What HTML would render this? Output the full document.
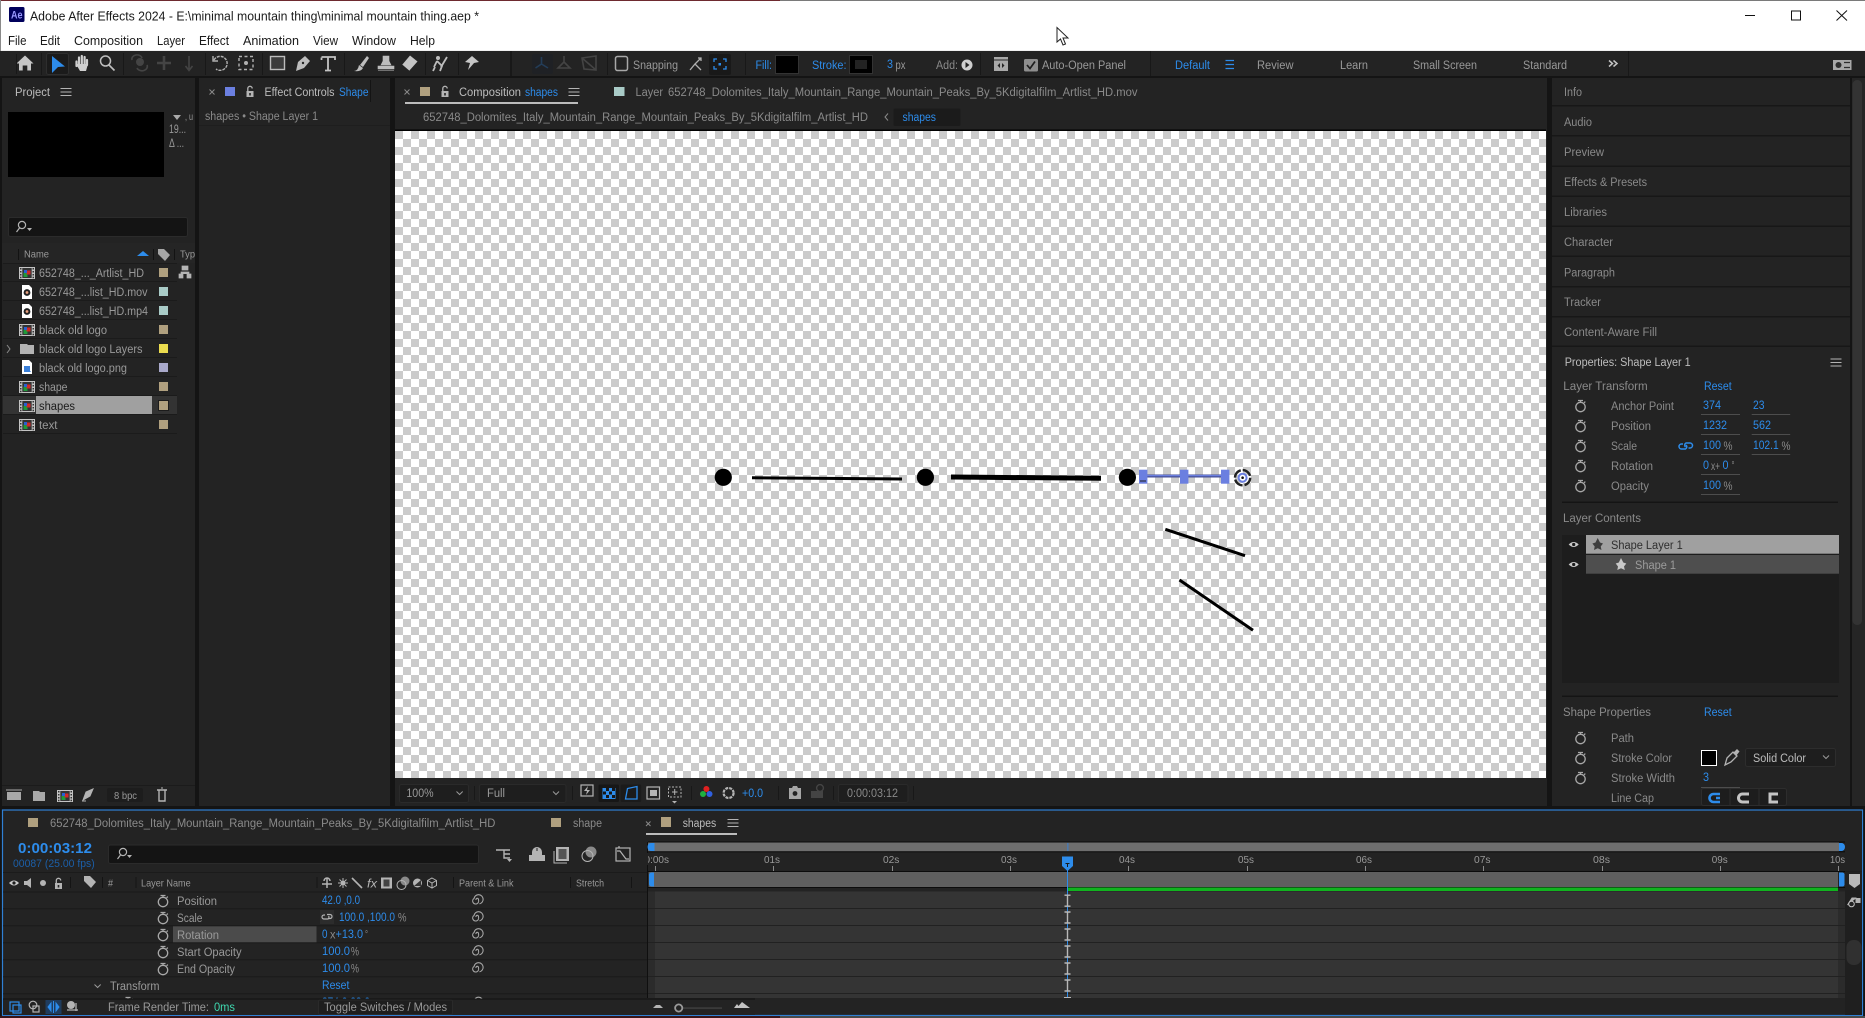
<!DOCTYPE html>
<html><head><meta charset="utf-8"><title>Adobe After Effects 2024</title>
<style>
html,body{margin:0;padding:0;background:#141414;width:1865px;height:1018px;overflow:hidden}
svg{display:block;position:absolute;left:0;top:0;filter:blur(.3px)}
text{font-family:"Liberation Sans",sans-serif;font-size:11.5px;fill:#999}
.m{fill:#1a1a1a;font-size:12.5px}
.b{fill:#2d8ceb}
.w{fill:#bdbdbd}
.d{fill:#8a8a8a}
.k{fill:#1c1c1c}
.s{font-size:10.5px}
.ic{fill:none;stroke:#b4b4b4;stroke-width:1.4}
.dim{fill:none;stroke:#444;stroke-width:1.6}
</style></head><body>
<svg width="1865" height="1018" viewBox="0 0 1865 1018" xmlns="http://www.w3.org/2000/svg">
<defs>
<pattern id="chk" width="16" height="16" patternUnits="userSpaceOnUse" x="395" y="131"><rect width="16" height="16" fill="#fff"/><rect width="8" height="8" fill="#cbcbcb"/><rect x="8" y="8" width="8" height="8" fill="#cbcbcb"/></pattern>
<symbol id="sw" overflow="visible"><circle cx="0" cy="1" r="4.7" fill="none" stroke="#a8a8a8" stroke-width="1.3"/><path d="M-2.5 -5.5H2.5M0 -5.5V-3.5M3.6 -3.2L4.8 -4.4" stroke="#a8a8a8" stroke-width="1.2" fill="none"/></symbol>
<symbol id="cmp" overflow="visible"><rect x="0" y="0" width="16" height="12" fill="#c4c4c4"/><rect x="1" y="1" width="1.5" height="1.5" fill="#333"/><rect x="1" y="4" width="1.5" height="1.5" fill="#333"/><rect x="1" y="7" width="1.5" height="1.5" fill="#333"/><rect x="1" y="9.7" width="1.5" height="1.5" fill="#333"/><rect x="13.5" y="1" width="1.5" height="1.5" fill="#333"/><rect x="13.5" y="4" width="1.5" height="1.5" fill="#333"/><rect x="13.5" y="7" width="1.5" height="1.5" fill="#333"/><rect x="13.5" y="9.7" width="1.5" height="1.5" fill="#333"/><rect x="3.3" y="1" width="9.4" height="10" fill="#333"/><rect x="4.5" y="5.5" width="4" height="4.5" fill="#1f9a3a"/><rect x="7.5" y="3.5" width="4" height="4" fill="#d02828"/><rect x="5" y="3" width="3" height="3" fill="#2a60d0"/></symbol>
<symbol id="mov" overflow="visible"><path d="M0 0H7L10 3V14H0Z" fill="#fff"/><circle cx="5" cy="7.5" r="3.4" fill="#222"/><circle cx="5" cy="7.5" r="1.4" fill="#e8a080"/></symbol>
<symbol id="spi" overflow="visible"><path d="M-1 0.5A1.3 1.3 0 1 1 1.5 0.5A3 3 0 1 1 -3 -1A4.6 4.6 0 1 1 2.5 4.3" fill="none" stroke="#a6a6a6" stroke-width="1.1"/></symbol>
<symbol id="eye" overflow="visible"><path d="M-5 0Q0 -5 5 0Q0 5 -5 0Z" fill="#c9c9c9"/><circle r="1.6" fill="#1c1c1c"/></symbol>
<symbol id="ibm" overflow="visible"><path d="M-3 -5.5H3M-3 5.5H3M0 -5.5V5.5" fill="none" stroke="#b8b8b8" stroke-width="1.4"/></symbol>
<symbol id="hm" overflow="visible"><path d="M-5.5 -3.5H5.5M-5.5 0H5.5M-5.5 3.5H5.5" stroke="#b4b4b4" stroke-width="1.1" fill="none"/></symbol>
<symbol id="lk" overflow="visible"><rect x="-3.5" y="-1" width="7" height="6" fill="#b4b4b4"/><path d="M-2.2 -1V-3.5A2.2 2.2 0 0 1 2.2 -3.5" fill="none" stroke="#b4b4b4" stroke-width="1.3"/><rect x="-0.8" y="1" width="1.6" height="2.5" fill="#232323"/></symbol>
</defs>

<!-- base -->
<rect width="1865" height="1018" fill="#141414"/>
<!-- title bar -->
<rect x="0" y="0" width="1865" height="51" fill="#fff"/>
<rect x="0" y="50" width="1865" height="1" fill="#efefef"/>
<rect x="0" y="0" width="780" height="1" fill="#6e2a2f"/><rect x="780" y="0" width="1085" height="1" fill="#7a7a7a"/>
<rect x="0" y="0" width="1" height="51" fill="#8a8a8a"/>
<rect x="9" y="7" width="15.5" height="15" rx="1.5" fill="#00005b"/>
<text x="11" y="18.5" textLength="11.5" lengthAdjust="spacingAndGlyphs" style="fill:#9999ff;font-size:11px;font-weight:bold">Ae</text>
<text class="m" x="30" y="20.5" textLength="449" lengthAdjust="spacingAndGlyphs">Adobe After Effects 2024 - E:\minimal mountain thing\minimal mountain thing.aep *</text>
<text class="m" x="8" y="45" textLength="18.5" lengthAdjust="spacingAndGlyphs">File</text>
<text class="m" x="40" y="45" textLength="20" lengthAdjust="spacingAndGlyphs">Edit</text>
<text class="m" x="74" y="45" textLength="69" lengthAdjust="spacingAndGlyphs">Composition</text>
<text class="m" x="157" y="45" textLength="28" lengthAdjust="spacingAndGlyphs">Layer</text>
<text class="m" x="199" y="45" textLength="30" lengthAdjust="spacingAndGlyphs">Effect</text>
<text class="m" x="243" y="45" textLength="56" lengthAdjust="spacingAndGlyphs">Animation</text>
<text class="m" x="313" y="45" textLength="25" lengthAdjust="spacingAndGlyphs">View</text>
<text class="m" x="352" y="45" textLength="44" lengthAdjust="spacingAndGlyphs">Window</text>
<text class="m" x="410" y="45" textLength="25" lengthAdjust="spacingAndGlyphs">Help</text>
<path d="M1745 15.5H1755" stroke="#111" stroke-width="1"/>
<rect x="1791.5" y="11" width="9" height="9" fill="none" stroke="#111" stroke-width="1"/>
<path d="M1836.5 10.5L1847 20.5M1847 10.5L1836.5 20.5" stroke="#111" stroke-width="1" fill="none"/>
<path d="M1057 27.5V42L1060.5 39L1063 45L1065.5 44L1063 38H1068Z" fill="#fff" stroke="#222" stroke-width="1"/>

<!-- toolbar -->
<rect x="0" y="51" width="1865" height="25" fill="#232323"/>
<path d="M16.5 63.5L25 55.5L33.5 63.5H31V70.5H27.3V65.5H22.7V70.5H19V63.5Z" fill="#c6c6c6"/>
<rect x="46.5" y="53.5" width="22" height="21" rx="2" fill="#1b1b1b" stroke="#2e2e2e"/>
<path d="M52 56L65 66.5L58 67L52 73Z" fill="#2d8ceb"/>
<path d="M76.5 61.5V66M79 57.5V64M81.8 56V64M84.6 57V64M87 60V65" stroke="#cfcfcf" stroke-width="2.2" stroke-linecap="round" fill="none"/><path d="M76 64L80 71H86L88 64Z" fill="#cfcfcf"/>
<circle cx="105.5" cy="61" r="5" fill="none" stroke="#c0c0c0" stroke-width="1.5"/><path d="M109 65L114.5 70.5" stroke="#c0c0c0" stroke-width="1.6"/>
<path d="M132 60A5 4 0 0 1 142 58M147 65A5 4 0 0 1 137 68" class="dim"/><circle cx="140" cy="62" r="4" fill="#444"/>
<path d="M164 56V70M157 63H171" stroke="#444" stroke-width="2.6"/>
<path d="M189 56V69M185.5 66L189 70.5L192.5 66" class="dim"/>
<path d="M214 60A7 7 0 1 1 216 69" fill="none" stroke="#b0b0b0" stroke-width="1.4" stroke-dasharray="3 1"/><path d="M213 56V61H218" fill="none" stroke="#b0b0b0" stroke-width="1.4"/>
<rect x="239" y="56.5" width="14" height="13" fill="none" stroke="#b0b0b0" stroke-width="1.4" stroke-dasharray="3 2.5"/><circle cx="246" cy="63" r="2" fill="#b0b0b0"/>
<rect x="270.5" y="56.5" width="14" height="13" fill="#3c3c3c" stroke="#bcbcbc" stroke-width="1.4"/>
<path d="M296 71L298 62L305 56L310 61L304 68Z" fill="#bdbdbd"/><circle cx="303" cy="63" r="1.2" fill="#232323"/>
<path d="M321.5 57.5V60M321.5 57H335V60M328 57V70M325 70.5H331" stroke="#c4c4c4" stroke-width="1.8" fill="none"/>
<path d="M367 56L360 65L363 67L369 58Z" fill="#bdbdbd"/><path d="M354 71Q358 71 359 65L363 68Q361 72 354 71Z" fill="#bdbdbd"/>
<path d="M383 56H389V61L391 65H381L383 61ZM378 66H394V69H378ZM378 70.5H394" fill="#bdbdbd" stroke="#bdbdbd" stroke-width=".6"/>
<path d="M402 65L410 55.5L417.5 61.5L409 71Z" fill="#c4c4c4"/><path d="M402 65L409 71" stroke="#232323"/>
<circle cx="438" cy="58" r="2" fill="#bdbdbd"/><path d="M437 61L434 67M437 61L442 66L440 71M435 67L433 71M447 57L441 67" stroke="#bdbdbd" stroke-width="1.8" fill="none"/>
<path d="M472 56L479 62L474 63L468 70L470 63L465 62Z" fill="#c6c6c6"/>
<rect x="532" y="54" width="21" height="20" rx="2" fill="#1f2125"/><path d="M541.5 64V57M541.5 64L535.5 68M541.5 64L548 68" stroke="#233d59" stroke-width="1.6"/>
<path d="M564 56V62M564 62L558 68H570Z" class="dim"/><path d="M582 58L596 56V70L584 69ZM582 58L596 70" class="dim"/>
<rect x="615.5" y="56.5" width="12" height="14" rx="2" fill="none" stroke="#a8a8a8" stroke-width="1.5"/>
<text x="633" y="69" textLength="45" lengthAdjust="spacingAndGlyphs">Snapping</text>
<path d="M690 70L695 64L701 70M695 64L701 58M698 58H701V61" stroke="#b0b0b0" stroke-width="1.3" fill="none"/>
<rect x="709" y="54" width="22" height="21" rx="2" fill="#191919"/>
<path d="M714 62V59H717M723 59H726V62M714 66V69H717M723 69H726V66" stroke="#2d8ceb" stroke-width="1.3" fill="none"/><rect x="718.5" y="63" width="2.5" height="2.5" fill="#2d8ceb"/>
<text class="b" x="755.5" y="69" textLength="16.5" lengthAdjust="spacingAndGlyphs">Fill:</text>
<rect x="775.5" y="55.5" width="23" height="18" fill="#000" stroke="#333"/>
<text class="b" x="812" y="69" textLength="34.5" lengthAdjust="spacingAndGlyphs">Stroke:</text>
<rect x="849.5" y="55.5" width="23" height="18" fill="#000" stroke="#333"/><rect x="855" y="60" width="12" height="9" fill="#232323"/>
<text class="b" x="887" y="68" textLength="6" lengthAdjust="spacingAndGlyphs">3</text>
<text x="895.5" y="69" textLength="10" lengthAdjust="spacingAndGlyphs">px</text>
<text class="d" x="936" y="69" textLength="22" lengthAdjust="spacingAndGlyphs">Add:</text>
<circle cx="967" cy="65" r="5.5" fill="#cfcfcf"/><path d="M965.5 62L969.5 65L965.5 68Z" fill="#232323"/>
<rect x="994" y="57" width="14" height="14" fill="#a8a8a8"/><path d="M994 60H1008" stroke="#232323"/><path d="M1000 63L997.5 65.5L1000 68ZM1002 63L1004.5 65.5L1002 68Z" fill="#232323"/>
<rect x="1024" y="59" width="14" height="12.5" rx="1.5" fill="#8e8e8e"/><path d="M1027 65L1030 68.5L1035 61.5" stroke="#1e1e1e" stroke-width="1.7" fill="none"/>
<text x="1042" y="69" textLength="84" lengthAdjust="spacingAndGlyphs">Auto-Open Panel</text>
<text class="b" x="1175" y="69" textLength="35" lengthAdjust="spacingAndGlyphs">Default</text>
<path d="M1225.5 60.5H1234M1225.5 64.5H1234M1225.5 68.5H1234" stroke="#2d8ceb" stroke-width="1.2"/>
<text x="1257" y="69" textLength="36.5" lengthAdjust="spacingAndGlyphs">Review</text>
<text x="1340" y="69" textLength="28" lengthAdjust="spacingAndGlyphs">Learn</text>
<text x="1413" y="69" textLength="64" lengthAdjust="spacingAndGlyphs">Small Screen</text>
<text x="1523" y="69" textLength="44" lengthAdjust="spacingAndGlyphs">Standard</text>
<path d="M1609 60.5L1612.5 63.5L1609 66.5M1613.5 60.5L1617 63.5L1613.5 66.5" fill="none" stroke="#c4c4c4" stroke-width="1.5"/>
<rect x="1833" y="60" width="18.5" height="10" fill="#a8a8a8"/><circle cx="1838.5" cy="65" r="3" fill="#2e2e2e"/><path d="M1844 62.5H1850M1844 67.5H1850" stroke="#2e2e2e" stroke-width="1.2"/>
<g fill="#181818"><rect x="16" y="54" width="1" height="20"/><rect x="41" y="53" width="1" height="22"/><rect x="123" y="53" width="1" height="22"/><rect x="205" y="53" width="1" height="22"/><rect x="262" y="53" width="1" height="22"/><rect x="344" y="53" width="1" height="22"/><rect x="425" y="53" width="1" height="22"/><rect x="458" y="53" width="1" height="22"/><rect x="510" y="51" width="2" height="25"/><rect x="607" y="53" width="1" height="22"/><rect x="745" y="53" width="1" height="22"/><rect x="980" y="53" width="1" height="22"/><rect x="1150" y="51" width="1" height="25"/><rect x="1628" y="51" width="1" height="25"/></g>

<!-- project panel -->
<rect x="2" y="78" width="193" height="728" fill="#232323"/>
<text class="w" x="15" y="96" textLength="35" lengthAdjust="spacingAndGlyphs">Project</text>
<use href="#hm" x="66" y="92"/>
<rect x="8" y="112" width="156" height="65" fill="#000"/>
<path d="M173 115H181L177 120Z" fill="#aaa"/>
<text x="169" y="133" textLength="17" lengthAdjust="spacingAndGlyphs">19...</text>
<text x="169" y="147" textLength="15" lengthAdjust="spacingAndGlyphs">Δ ...</text>
<text class="s" x="185" y="120" textLength="8" lengthAdjust="spacingAndGlyphs">, u</text>
<rect x="8.5" y="217.5" width="179" height="19" rx="2" fill="#141414" stroke="#2b2b2b"/>
<circle cx="22" cy="225" r="3.6" fill="none" stroke="#b4b4b4" stroke-width="1.2"/><path d="M19.5 228L16.5 232" stroke="#b4b4b4" stroke-width="1.2"/><path d="M27 228H32L29.5 231Z" fill="#b4b4b4"/>
<rect x="2" y="243" width="193" height="20" fill="#252525"/>
<g fill="#131313"><rect x="18" y="249" width="1" height="11"/><rect x="153" y="249" width="1" height="11"/><rect x="174" y="249" width="1" height="11"/></g>
<text class="s" x="24" y="257.5" textLength="25" lengthAdjust="spacingAndGlyphs">Name</text>
<path d="M137 256L143 251L149 256Z" fill="#2d8ceb"/>
<path d="M158 249H164L170 255L165 261L158 254Z" fill="#a6a6a6"/>
<text class="s" x="180" y="257.5" textLength="15" lengthAdjust="spacingAndGlyphs">Typ</text>
<rect x="3" y="396" width="174" height="18.5" fill="#333"/>
<rect x="36" y="396" width="116" height="18" fill="#a0a0a0"/>
<g fill="#1b1b1b"><rect x="3" y="263" width="174" height="1"/><rect x="3" y="281" width="174" height="1"/><rect x="3" y="300" width="174" height="1"/><rect x="3" y="319" width="174" height="1"/><rect x="3" y="338" width="174" height="1"/><rect x="3" y="357" width="174" height="1"/><rect x="3" y="376" width="174" height="1"/><rect x="3" y="395" width="174" height="1"/><rect x="3" y="414" width="174" height="1"/><rect x="3" y="433" width="174" height="1"/></g>
<use href="#cmp" x="19" y="267"/>
<use href="#mov" x="22" y="285"/>
<use href="#mov" x="22" y="304"/>
<use href="#cmp" x="19" y="324"/>
<path d="M20 344H27L28 345H34V354H20Z" fill="#b4b4b4"/>
<path d="M7 345L10 349L7 353" fill="none" stroke="#8a8a8a"/>
<path d="M22 360H29L32 363V374H22Z" fill="#fff"/><path d="M24 372L27 367L31 372ZM24 372V366H30V372Z" fill="#3a7fd8"/>
<use href="#cmp" x="19" y="381"/>
<use href="#cmp" x="19" y="400"/>
<use href="#cmp" x="19" y="419"/>
<text x="39" y="277" textLength="105" lengthAdjust="spacingAndGlyphs">652748_..._Artlist_HD</text>
<text x="39" y="296" textLength="108.5" lengthAdjust="spacingAndGlyphs">652748_...list_HD.mov</text>
<text x="39" y="315" textLength="109" lengthAdjust="spacingAndGlyphs">652748_...list_HD.mp4</text>
<text x="39" y="334" textLength="68" lengthAdjust="spacingAndGlyphs">black old logo</text>
<text x="39" y="353" textLength="103.5" lengthAdjust="spacingAndGlyphs">black old logo Layers</text>
<text x="39" y="372" textLength="88" lengthAdjust="spacingAndGlyphs">black old logo.png</text>
<text x="39" y="391" textLength="28.5" lengthAdjust="spacingAndGlyphs">shape</text>
<text class="k" x="39" y="410" textLength="36" lengthAdjust="spacingAndGlyphs">shapes</text>
<text x="39" y="429" textLength="18.5" lengthAdjust="spacingAndGlyphs">text</text>
<g><rect x="159" y="268" width="9" height="9" fill="#b0a07f"/><rect x="159" y="287" width="9" height="9" fill="#a9cbc7"/><rect x="159" y="306" width="9" height="9" fill="#a9cbc7"/><rect x="159" y="325" width="9" height="9" fill="#b0a07f"/><rect x="159" y="344" width="9" height="9" fill="#ebdc4f"/><rect x="159" y="363" width="9" height="9" fill="#a9a9ca"/><rect x="159" y="382" width="9" height="9" fill="#b0a07f"/><rect x="158" y="400" width="11" height="11" fill="#1c1c1c"/><rect x="159" y="401" width="9" height="9" fill="#b0a07f"/><rect x="159" y="420" width="9" height="9" fill="#b0a07f"/></g>
<path d="M182 270H188V266H182ZM185 266V270M179 274H183V278H179ZM187 274H191V278H187ZM181 274V272H189V274" fill="#b4b4b4" stroke="#b4b4b4" stroke-width=".7"/>
<rect x="2" y="785" width="193" height="1" fill="#1b1b1b"/>
<rect x="7" y="792" width="14" height="8" fill="#a8a8a8"/><path d="M6 790H22" stroke="#a8a8a8"/>
<path d="M33 791H39L40 792H45V801H33Z" fill="#a8a8a8"/>
<use href="#cmp" x="57" y="790"/>
<path d="M83 800L86 792L93 789L90 796ZM82 801H86" fill="#b4b4b4" stroke="#b4b4b4"/>
<rect x="107" y="788" width="36" height="14" rx="2" fill="#1d1d1d"/>
<text class="s" x="114" y="799" textLength="23" lengthAdjust="spacingAndGlyphs">8 bpc</text>
<path d="M157 790H167M159 790V801H165V790" fill="none" stroke="#b4b4b4" stroke-width="1.4"/><path d="M161 788H163" stroke="#b4b4b4"/>

<!-- effect controls -->
<rect x="199" y="78" width="191" height="728" fill="#232323"/>
<path d="M209.5 89.5L214.5 94.5M214.5 89.5L209.5 94.5" stroke="#8a8a8a" stroke-width="1"/>
<rect x="225" y="87" width="10" height="9" fill="#6b7fe0"/>
<use href="#lk" x="250" y="92"/>
<text class="w" x="264.5" y="96" textLength="70" lengthAdjust="spacingAndGlyphs">Effect Controls</text>
<text class="b" x="339" y="96" textLength="29.5" lengthAdjust="spacingAndGlyphs">Shape</text>
<rect x="370" y="80" width="1" height="22" fill="#141414"/>
<text class="d" x="205" y="120" textLength="113" lengthAdjust="spacingAndGlyphs">shapes • Shape Layer 1</text>
<rect x="199" y="125" width="191" height="1" fill="#1e1e1e"/>

<!-- comp panel -->
<rect x="395" y="78" width="1152" height="728" fill="#232323"/>
<path d="M404.5 89.5L409.5 94.5M409.5 89.5L404.5 94.5" stroke="#8a8a8a" stroke-width="1"/>
<rect x="420" y="87" width="10" height="9" fill="#b0a07f"/>
<use href="#lk" x="445" y="92"/>
<text class="w" x="459" y="96" textLength="62" lengthAdjust="spacingAndGlyphs">Composition</text>
<text class="b" x="525" y="96" textLength="33" lengthAdjust="spacingAndGlyphs">shapes</text>
<use href="#hm" x="574" y="92"/>
<rect x="405" y="102" width="173" height="2" fill="#bcbcbc"/>
<rect x="614" y="87" width="10.5" height="9" fill="#a9cbc7"/>
<text class="d" x="635.5" y="96" textLength="27.5" lengthAdjust="spacingAndGlyphs">Layer</text>
<text class="d" x="668" y="96" textLength="469.5" lengthAdjust="spacingAndGlyphs">652748_Dolomites_Italy_Mountain_Range_Mountain_Peaks_By_5Kdigitalfilm_Artlist_HD.mov</text>
<text class="d" x="423" y="121" textLength="445" lengthAdjust="spacingAndGlyphs">652748_Dolomites_Italy_Mountain_Range_Mountain_Peaks_By_5Kdigitalfilm_Artlist_HD</text>
<path d="M888 113.5L885 117L888 120.5" fill="none" stroke="#8a8a8a"/>
<rect x="893.5" y="108.5" width="67" height="17.5" rx="1.5" fill="#1b1b1b"/>
<text class="b" x="902.5" y="121" textLength="33.5" lengthAdjust="spacingAndGlyphs">shapes</text>
<rect x="395" y="129.5" width="1151" height="1.5" fill="#000"/>
<rect x="395" y="131" width="1151" height="647" fill="url(#chk)"/>

<!-- shapes -->
<circle cx="723.3" cy="477.3" r="8.6" fill="#000"/><circle cx="925.4" cy="477.3" r="8.6" fill="#000"/><circle cx="1127.4" cy="477.3" r="8.6" fill="#000"/>
<path d="M752 477.8L902 479" stroke="#000" stroke-width="3"/>
<path d="M951 477L1101 478.3" stroke="#000" stroke-width="5"/>
<path d="M1147 476H1222" stroke="#444f96" stroke-width="3"/><path d="M1147 475.6H1222" stroke="#6b7fe0" stroke-width="1.2"/>
<rect x="1139" y="469.7" width="8.4" height="14" fill="#6b7fe0"/><rect x="1180" y="469.7" width="8.4" height="14" fill="#6b7fe0"/><rect x="1221" y="469.7" width="8.4" height="14" fill="#6b7fe0"/>
<path d="M1140 481H1146" stroke="#222"/>
<circle cx="1242.6" cy="477.7" r="7.6" fill="none" stroke="#222" stroke-width="2.4" stroke-dasharray="9.9 2"/><circle cx="1242.6" cy="477.7" r="4" fill="#fff" stroke="#6b7fe0" stroke-width="2"/><circle cx="1242.6" cy="477.7" r="1.3" fill="#111"/>
<path d="M1165.3 529.3L1245 555.7" stroke="#000" stroke-width="3"/>
<path d="M1179.5 580L1253 630.3" stroke="#000" stroke-width="3"/>

<!-- viewer bar -->
<rect x="399.5" y="784.5" width="69" height="18" rx="2" fill="#1e1e1e" stroke="#2a2a2a"/>
<text x="406.4" y="797" textLength="27.2" lengthAdjust="spacingAndGlyphs">100%</text>
<path d="M456.5 791.5L459.6 794.5L462.7 791.5" fill="none" stroke="#999"/>
<rect x="479.5" y="784.5" width="86.5" height="18" rx="2" fill="#1e1e1e" stroke="#2a2a2a"/>
<text x="487" y="797" textLength="18" lengthAdjust="spacingAndGlyphs">Full</text>
<path d="M553 791.5L556 794.5L559 791.5" fill="none" stroke="#999"/>
<rect x="581" y="785" width="12" height="11" fill="none" stroke="#b4b4b4" stroke-width="1.2"/><path d="M588 786L584 791H587L586 795L590 790H587Z" fill="#b4b4b4"/>
<rect x="598.5" y="784.5" width="20.5" height="17.5" rx="1.5" fill="#171717"/>
<rect x="602.5" y="788" width="13" height="11" fill="#2d8ceb"/><g fill="#171717"><rect x="606" y="788" width="3" height="3"/><rect x="612" y="788" width="3" height="3"/><rect x="603" y="791.5" width="3" height="3"/><rect x="609" y="791.5" width="3" height="3"/><rect x="606" y="795" width="3" height="3"/><rect x="612" y="795" width="3" height="3"/></g>
<rect x="620.7" y="784.5" width="20.5" height="17.5" rx="1.5" fill="#1b1b1b"/>
<path d="M625.5 799L627.5 788.5L637 786.5V799Z" fill="none" stroke="#2d8ceb" stroke-width="1.3"/>
<rect x="647" y="787" width="12.5" height="12" fill="none" stroke="#b4b4b4" stroke-width="1.2"/><rect x="650" y="790" width="7" height="6" fill="#b4b4b4"/>
<rect x="668.5" y="787" width="12.5" height="10" fill="none" stroke="#b4b4b4" stroke-dasharray="2 1.5"/><path d="M674.7 789V795M672 792H677.5" stroke="#b4b4b4"/><path d="M672 801H677L674.5 803.5Z" fill="#b4b4b4"/>
<circle cx="706.4" cy="789" r="3" fill="#e02020"/><circle cx="703" cy="794" r="3" fill="#20b040"/><circle cx="709.5" cy="794" r="3" fill="#3060e0"/>
<circle cx="728.6" cy="793" r="5" fill="none" stroke="#b4b4b4" stroke-width="2.2" stroke-dasharray="3 1"/>
<text class="b" x="742" y="797" textLength="21" lengthAdjust="spacingAndGlyphs">+0.0</text>
<path d="M789 788H792L793 786H797L798 788H801V799H789Z" fill="#a6a6a6"/><circle cx="795" cy="793.5" r="2.4" fill="#232323"/>
<path d="M811 791H823V798H811Z" fill="#444"/><circle cx="820" cy="788" r="3.4" fill="none" stroke="#444" stroke-width="1.4"/>
<rect x="838.5" y="784.5" width="69.5" height="18" rx="2" fill="#1e1e1e" stroke="#2a2a2a"/>
<text class="d" x="847" y="797" textLength="51" lengthAdjust="spacingAndGlyphs">0:00:03:12</text>
<g fill="#181818"><rect x="474" y="786" width="1" height="14"/><rect x="572" y="786" width="1" height="14"/><rect x="691" y="786" width="1" height="14"/><rect x="778" y="786" width="1" height="14"/><rect x="833" y="786" width="1" height="14"/><rect x="913" y="786" width="1" height="14"/></g>

<!-- right panel -->
<rect x="1552" y="78" width="298" height="728" fill="#232323"/>
<rect x="1852" y="78" width="13" height="730" fill="#252525"/>
<rect x="1852.5" y="80" width="9.5" height="545" rx="4.5" fill="#333"/>
<g fill="#171717"><rect x="1552" y="105" width="298" height="1.5"/><rect x="1552" y="135" width="298" height="1.5"/><rect x="1552" y="165.5" width="298" height="1.5"/><rect x="1552" y="195.5" width="298" height="1.5"/><rect x="1552" y="225.5" width="298" height="1.5"/><rect x="1552" y="255.5" width="298" height="1.5"/><rect x="1552" y="286" width="298" height="1.5"/><rect x="1552" y="316" width="298" height="1.5"/><rect x="1552" y="345.5" width="298" height="1.5"/></g>
<text class="d" x="1564" y="96" textLength="18" lengthAdjust="spacingAndGlyphs">Info</text>
<text class="d" x="1564" y="126" textLength="28" lengthAdjust="spacingAndGlyphs">Audio</text>
<text class="d" x="1564" y="156" textLength="40" lengthAdjust="spacingAndGlyphs">Preview</text>
<text class="d" x="1564" y="186" textLength="83" lengthAdjust="spacingAndGlyphs">Effects &amp; Presets</text>
<text class="d" x="1564" y="216" textLength="43" lengthAdjust="spacingAndGlyphs">Libraries</text>
<text class="d" x="1564" y="246" textLength="49" lengthAdjust="spacingAndGlyphs">Character</text>
<text class="d" x="1564" y="276.5" textLength="51" lengthAdjust="spacingAndGlyphs">Paragraph</text>
<text class="d" x="1564" y="306" textLength="37" lengthAdjust="spacingAndGlyphs">Tracker</text>
<text class="d" x="1564" y="336" textLength="93" lengthAdjust="spacingAndGlyphs">Content-Aware Fill</text>
<text class="w" x="1564.7" y="366" textLength="126" lengthAdjust="spacingAndGlyphs">Properties: Shape Layer 1</text>
<use href="#hm" x="1836" y="362.5"/>
<text class="d" x="1563.3" y="390" textLength="84.4" lengthAdjust="spacingAndGlyphs">Layer Transform</text>
<text class="b" x="1704" y="390" textLength="27.7" lengthAdjust="spacingAndGlyphs">Reset</text>
<use href="#sw" x="1580.5" y="406"/><use href="#sw" x="1580.5" y="426"/><use href="#sw" x="1580.5" y="446"/><use href="#sw" x="1580.5" y="466"/><use href="#sw" x="1580.5" y="486"/>
<text class="d" x="1611" y="410" textLength="63" lengthAdjust="spacingAndGlyphs">Anchor Point</text>
<text class="d" x="1611" y="430" textLength="40" lengthAdjust="spacingAndGlyphs">Position</text>
<text class="d" x="1611" y="450" textLength="26" lengthAdjust="spacingAndGlyphs">Scale</text>
<text class="d" x="1611" y="470" textLength="42" lengthAdjust="spacingAndGlyphs">Rotation</text>
<text class="d" x="1611" y="490" textLength="38" lengthAdjust="spacingAndGlyphs">Opacity</text>
<text class="b" x="1703" y="409" textLength="18" lengthAdjust="spacingAndGlyphs">374</text>
<text class="b" x="1753" y="409" textLength="11.5" lengthAdjust="spacingAndGlyphs">23</text>
<text class="b" x="1703" y="429" textLength="24" lengthAdjust="spacingAndGlyphs">1232</text>
<text class="b" x="1753" y="429" textLength="18" lengthAdjust="spacingAndGlyphs">562</text>
<text class="b" x="1703" y="449" textLength="18" lengthAdjust="spacingAndGlyphs">100</text><text class="d" x="1723.5" y="450" textLength="9" lengthAdjust="spacingAndGlyphs">%</text>
<text class="b" x="1753" y="449" textLength="25.7" lengthAdjust="spacingAndGlyphs">102.1</text><text class="d" x="1781.5" y="450" textLength="9" lengthAdjust="spacingAndGlyphs">%</text>
<text class="b" x="1703" y="469" textLength="6" lengthAdjust="spacingAndGlyphs">0</text><text class="d" x="1711" y="470" textLength="9" lengthAdjust="spacingAndGlyphs">x+</text><text class="b" x="1722.5" y="469" textLength="6" lengthAdjust="spacingAndGlyphs">0</text><text class="d" x="1731.5" y="469" textLength="3" lengthAdjust="spacingAndGlyphs">°</text>
<text class="b" x="1703" y="489" textLength="18" lengthAdjust="spacingAndGlyphs">100</text><text class="d" x="1723.5" y="490" textLength="9" lengthAdjust="spacingAndGlyphs">%</text>
<g fill="#4d4d4d"><rect x="1701" y="414" width="39" height="1"/><rect x="1751.7" y="414" width="38.5" height="1"/><rect x="1701" y="434" width="39" height="1"/><rect x="1751.7" y="434" width="38.5" height="1"/><rect x="1701" y="454" width="39" height="1"/><rect x="1751.7" y="454" width="38.5" height="1"/><rect x="1701" y="474" width="39" height="1"/><rect x="1701" y="494" width="39" height="1"/><rect x="1701" y="787" width="39" height="1"/></g>
<path d="M1683 444H1681.5A2.5 2.5 0 0 0 1681.5 449H1685.5A2.5 2.5 0 0 0 1686 445M1688.5 448H1690A2.5 2.5 0 0 0 1690 443H1686A2.5 2.5 0 0 0 1685.5 447" fill="none" stroke="#2d8ceb" stroke-width="1.5"/>
<rect x="1562" y="501.5" width="276" height="1.5" fill="#141414"/>
<text class="d" x="1563" y="522" textLength="78" lengthAdjust="spacingAndGlyphs">Layer Contents</text>
<rect x="1562" y="535" width="277" height="148" fill="#1d1d1d"/>
<rect x="1586" y="535" width="253" height="18.7" fill="#a0a0a0"/>
<rect x="1586" y="555" width="253" height="18.7" fill="#4e4e4e"/>
<use href="#eye" x="1573.7" y="544.5"/><use href="#eye" x="1573.7" y="564.5"/>
<polygon points="1597.7,538 1600,542.5 1603,543.5 1600.7,546.5 1601.5,550 1597.7,548.2 1594,550 1594.7,546.5 1592.4,543.5 1595.5,542.5" fill="#3e3e3e"/>
<polygon points="1621,558 1623.3,562.5 1626.3,563.5 1624,566.5 1624.8,570 1621,568.2 1617.3,570 1618,566.5 1615.7,563.5 1618.8,562.5" fill="#c8c8c8"/>
<text x="1611" y="549" textLength="71.7" lengthAdjust="spacingAndGlyphs" style="fill:#2e2e2e">Shape Layer 1</text>
<text x="1635" y="569" textLength="41" lengthAdjust="spacingAndGlyphs" style="fill:#9c9c9c">Shape 1</text>
<rect x="1562" y="695.5" width="276" height="1.5" fill="#141414"/>
<text class="d" x="1563" y="716" textLength="88" lengthAdjust="spacingAndGlyphs">Shape Properties</text>
<text class="b" x="1704" y="716" textLength="27.7" lengthAdjust="spacingAndGlyphs">Reset</text>
<use href="#sw" x="1580.5" y="738"/><use href="#sw" x="1580.5" y="758"/><use href="#sw" x="1580.5" y="778"/>
<text class="d" x="1611" y="742" textLength="23" lengthAdjust="spacingAndGlyphs">Path</text>
<text class="d" x="1611" y="762" textLength="61" lengthAdjust="spacingAndGlyphs">Stroke Color</text>
<text class="d" x="1611" y="782" textLength="64" lengthAdjust="spacingAndGlyphs">Stroke Width</text>
<text class="d" x="1611" y="802" textLength="43" lengthAdjust="spacingAndGlyphs">Line Cap</text>
<rect x="1701.5" y="750.5" width="15" height="15" fill="#000" stroke="#fff"/>
<path d="M1725 765L1727 758L1733 752L1737 756L1731 762Z" fill="none" stroke="#b4b4b4" stroke-width="1.3"/><path d="M1733 753L1737 749L1739.5 751.5L1736 756Z" fill="#b4b4b4"/>
<rect x="1745.5" y="748.5" width="90" height="18" rx="2" fill="#1e1e1e" stroke="#2d2d2d"/>
<text class="w" x="1753" y="762" textLength="53" lengthAdjust="spacingAndGlyphs">Solid Color</text>
<path d="M1823 755.5L1826 758.5L1829 755.5" fill="none" stroke="#999"/>
<text class="b" x="1703" y="781" textLength="6" lengthAdjust="spacingAndGlyphs">3</text>
<rect x="1701.5" y="788.5" width="85" height="17" rx="2" fill="#1d1d1d" stroke="#2d2d2d"/>
<path d="M1730 789V805M1759 789V805" stroke="#2d2d2d"/>
<path d="M1720 794H1713.5A3.5 3.5 0 0 0 1713.5 802H1720M1716 798H1720" fill="none" stroke="#2d8ceb" stroke-width="2.6"/>
<path d="M1749 794H1742.5A3.5 3.5 0 0 0 1742.5 802H1749" fill="none" stroke="#c4c4c4" stroke-width="3"/>
<path d="M1778 794H1770V802H1778" fill="none" stroke="#c4c4c4" stroke-width="3"/>
<rect x="1548" y="806" width="317" height="4" fill="#141414"/>

<!-- timeline -->
<rect x="2.5" y="810" width="1860" height="205.5" fill="#232323" stroke="#2f80d4" stroke-width="1.2"/>
<rect x="28" y="818" width="10" height="9" fill="#b0a07f"/>
<text class="d" x="50" y="827" textLength="445.4" lengthAdjust="spacingAndGlyphs">652748_Dolomites_Italy_Mountain_Range_Mountain_Peaks_By_5Kdigitalfilm_Artlist_HD</text>
<rect x="551" y="818" width="10" height="9" fill="#b0a07f"/>
<text class="d" x="573" y="827" textLength="29" lengthAdjust="spacingAndGlyphs">shape</text>
<path d="M646 821.5L650.5 826M650.5 821.5L646 826" stroke="#8a8a8a"/>
<rect x="661" y="817" width="10" height="10" fill="#b0a07f"/>
<text class="w" x="682.7" y="827" textLength="33.5" lengthAdjust="spacingAndGlyphs">shapes</text>
<use href="#hm" x="733" y="823"/>
<rect x="646" y="833" width="91" height="2" fill="#bcbcbc"/>
<text x="18" y="853" textLength="74" lengthAdjust="spacingAndGlyphs" style="fill:#2d8ceb;font-size:14.5px;font-weight:bold">0:00:03:12</text>
<text x="13" y="867" textLength="81.7" lengthAdjust="spacingAndGlyphs" style="fill:#1c5fa8;font-size:11px">00087 (25.00 fps)</text>
<rect x="108.5" y="845" width="370" height="18.5" rx="2" fill="#141414" stroke="#2b2b2b"/>
<circle cx="123" cy="852" r="3.6" fill="none" stroke="#b4b4b4" stroke-width="1.2"/><path d="M120.5 855L117.5 859" stroke="#b4b4b4" stroke-width="1.2"/><path d="M127 855H132L129.5 858Z" fill="#b4b4b4"/>
<path d="M496 850H510M504 850V858H510M504 854H510" fill="none" stroke="#b4b4b4" stroke-width="1.4"/><path d="M507 859H512L509.5 862Z" fill="#b4b4b4"/>
<path d="M529 855H545V861H529ZM532 855V852A5 5 0 0 1 542 852V855H532Z" fill="#b4b4b4"/><path d="M537 848V851" stroke="#232323"/>
<rect x="556" y="847" width="13" height="14" fill="#b4b4b4"/><rect x="558.5" y="849" width="8" height="10" fill="#555"/><path d="M554 851V863H567" fill="none" stroke="#b4b4b4"/>
<circle cx="591" cy="852" r="5.5" fill="#8a8a8a"/><circle cx="587.5" cy="856" r="5.5" fill="none" stroke="#b4b4b4"/>
<rect x="616" y="848" width="14" height="13" fill="none" stroke="#b4b4b4" stroke-width="1.2"/><path d="M617 851H620L626 859H629M619 846V848" fill="none" stroke="#b4b4b4" stroke-width="1.2"/>
<!-- column header -->
<rect x="3" y="872" width="644" height="1" fill="#1b1b1b"/><rect x="3" y="891.5" width="644" height="1" fill="#1a1a1a"/>
<use href="#eye" x="14" y="883"/>
<path d="M24 881H27L31 878V888L27 885H24Z" fill="#b4b4b4"/><circle cx="43" cy="883" r="3" fill="#b4b4b4"/>
<use href="#lk" x="58.5" y="884"/>
<path d="M84 876H90L96 882L91 888L84 881Z" fill="#b4b4b4"/>
<text class="s" x="108" y="886.5" textLength="5" lengthAdjust="spacingAndGlyphs">#</text>
<g fill="#141414"><rect x="70" y="877" width="1" height="11"/><rect x="102" y="877" width="1" height="11"/><rect x="135.5" y="877" width="1" height="11"/><rect x="316.5" y="877" width="1" height="11"/><rect x="453" y="877" width="1" height="11"/><rect x="570" y="877" width="1" height="11"/><rect x="631" y="877" width="1" height="11"/></g>
<text class="s" x="141" y="886.5" textLength="49.7" lengthAdjust="spacingAndGlyphs">Layer Name</text>
<path d="M322 884H332M327 878V888M324 881A3 3 0 0 1 330 881" fill="none" stroke="#b4b4b4" stroke-width="1.5"/>
<circle cx="343" cy="883" r="2.3" fill="#b4b4b4"/><path d="M343 878V888M338 883H348M339.5 879.5L346.5 886.5M346.5 879.5L339.5 886.5" stroke="#b4b4b4"/>
<path d="M352 878L362 888" stroke="#b4b4b4" stroke-width="1.6"/>
<text x="367" y="887.5" textLength="10" lengthAdjust="spacingAndGlyphs" style="font-style:italic;fill:#b4b4b4;font-size:12px">fx</text>
<rect x="381" y="877.5" width="11" height="11" fill="#b4b4b4"/><rect x="383.5" y="879.5" width="6" height="7" fill="#444"/>
<circle cx="405" cy="881" r="4.5" fill="#8a8a8a"/><circle cx="401.5" cy="885" r="4.5" fill="none" stroke="#b4b4b4"/>
<circle cx="417.5" cy="883" r="4.5" fill="#b4b4b4"/><path d="M414 886L421 880V886Z" fill="#333"/>
<path d="M432 878L436.5 880.5V885.5L432 888L427.5 885.5V880.5ZM427.5 880.5L432 883L436.5 880.5M432 883V888" fill="none" stroke="#b4b4b4"/>
<text class="s" x="459" y="886.5" textLength="54.5" lengthAdjust="spacingAndGlyphs">Parent &amp; Link</text>
<text class="s" x="576" y="886.5" textLength="28" lengthAdjust="spacingAndGlyphs">Stretch</text>
<!-- layer rows -->
<rect x="173" y="926" width="143.5" height="16.5" fill="#4b4b4b"/>
<g fill="#1a1a1a"><rect x="3" y="908.3" width="644" height="1"/><rect x="3" y="925.3" width="644" height="1"/><rect x="3" y="942.3" width="644" height="1"/><rect x="3" y="959.3" width="644" height="1"/><rect x="3" y="976.3" width="644" height="1"/><rect x="3" y="993.3" width="644" height="1"/></g>
<use href="#sw" x="163" y="901"/><use href="#sw" x="163" y="918"/><use href="#sw" x="163" y="935"/><use href="#sw" x="163" y="952"/><use href="#sw" x="163" y="969"/>
<text x="177" y="905" textLength="40" lengthAdjust="spacingAndGlyphs">Position</text>
<text x="177" y="922" textLength="25.4" lengthAdjust="spacingAndGlyphs">Scale</text>
<text x="177" y="939" textLength="42" lengthAdjust="spacingAndGlyphs">Rotation</text>
<text x="177" y="956" textLength="64.6" lengthAdjust="spacingAndGlyphs">Start Opacity</text>
<text x="177" y="973" textLength="58" lengthAdjust="spacingAndGlyphs">End Opacity</text>
<path d="M94.5 984.5L97.6 987.5L100.7 984.5" fill="none" stroke="#9a9a9a"/>
<text x="110" y="990" textLength="49.5" lengthAdjust="spacingAndGlyphs">Transform</text>
<text class="b" x="322" y="904" textLength="38" lengthAdjust="spacingAndGlyphs">42.0 ,0.0</text>
<rect x="320" y="910" width="14" height="14" fill="#2c2c2c"/>
<path d="M325 915H324A2 2 0 0 0 324 919H328A2 2 0 0 0 328.5 916M329 918.5H330A2 2 0 0 0 330 914.5H327" fill="none" stroke="#b4b4b4" stroke-width="1.2"/>
<text class="b" x="339" y="921" textLength="56" lengthAdjust="spacingAndGlyphs">100.0 ,100.0</text><text class="d" x="398" y="921.5" textLength="8.5" lengthAdjust="spacingAndGlyphs">%</text>
<text class="b" x="322" y="938" textLength="5.5" lengthAdjust="spacingAndGlyphs">0</text><text class="d" x="330" y="938.5" textLength="5.5" lengthAdjust="spacingAndGlyphs">x</text><text class="b" x="335.5" y="938" textLength="27.5" lengthAdjust="spacingAndGlyphs">+13.0</text><text class="d" x="365" y="938" textLength="3" lengthAdjust="spacingAndGlyphs">°</text>
<text class="b" x="322" y="955" textLength="28" lengthAdjust="spacingAndGlyphs">100.0</text><text class="d" x="351" y="955.5" textLength="8" lengthAdjust="spacingAndGlyphs">%</text>
<text class="b" x="322" y="972" textLength="28" lengthAdjust="spacingAndGlyphs">100.0</text><text class="d" x="351" y="972.5" textLength="8" lengthAdjust="spacingAndGlyphs">%</text>
<text class="b" x="322" y="989" textLength="27.4" lengthAdjust="spacingAndGlyphs">Reset</text>
<use href="#spi" x="477" y="899.5"/><use href="#spi" x="477" y="916.5"/><use href="#spi" x="477" y="933.5"/><use href="#spi" x="477" y="950.5"/><use href="#spi" x="477" y="967.5"/>
<use href="#sw" x="128" y="1003"/>
<text class="b" x="322" y="1006" textLength="48" lengthAdjust="spacingAndGlyphs">374.0,23.0</text>
<use href="#spi" x="477" y="1002"/>
<!-- bottom bar -->
<rect x="3" y="999" width="752" height="16" fill="#232323"/>
<rect x="3" y="998.5" width="752" height="1" fill="#111"/>
<rect x="45.5" y="1000" width="16" height="14" fill="#1f3c5e"/>
<rect x="10" y="1002" width="9" height="9" fill="none" stroke="#2d8ceb" stroke-width="1.2"/><rect x="13" y="1005" width="8" height="8" fill="none" stroke="#2d8ceb" stroke-width="1.2"/>
<circle cx="33" cy="1005" r="3.8" fill="none" stroke="#b4b4b4" stroke-width="1.2"/><rect x="33" y="1006" width="6" height="6" fill="none" stroke="#b4b4b4" stroke-width="1.2"/>
<path d="M53.5 1001V1013M51 1003L48 1007L51 1011ZM56 1003L59 1007L56 1011Z" fill="#2d8ceb" stroke="#2d8ceb"/>
<circle cx="71" cy="1005" r="4" fill="#b4b4b4"/><path d="M67 1010H78M76 1003V1011" stroke="#b4b4b4" stroke-width="1.3"/>
<text x="108" y="1011" textLength="101" lengthAdjust="spacingAndGlyphs">Frame Render Time:</text>
<text x="214" y="1011" textLength="21" lengthAdjust="spacingAndGlyphs" style="fill:#3fd8b0">0ms</text>
<rect x="318.5" y="1000" width="134" height="14.5" rx="1.5" fill="#1e1e1e" stroke="#2a2a2a"/>
<text x="324" y="1011" textLength="123" lengthAdjust="spacingAndGlyphs">Toggle Switches / Modes</text>
<!-- timeline right -->
<rect x="647" y="842" width="1" height="156" fill="#0f0f0f"/>
<rect x="648" y="842.3" width="1191" height="9.4" fill="#6e6e6e"/>
<path d="M648 842H1845M648 851.7H1845" stroke="#0a0a0a" stroke-width="1"/>
<path d="M654.5 843H651A3.5 4 0 0 0 651 851H654.5Z" fill="#2d8ceb"/>
<path d="M1839 843H1841.5A3.5 4 0 0 1 1841.5 851H1839Z" fill="#2d8ceb"/>
<rect x="1067" y="843" width="1.6" height="8" fill="#4e79ab"/>
<text class="s" x="644.5" y="863" textLength="24.5" lengthAdjust="spacingAndGlyphs">0:00s</text>
<rect x="640" y="853" width="8" height="12" fill="#232323"/>
<text class="s" x="764" y="863" textLength="16" lengthAdjust="spacingAndGlyphs">01s</text>
<text class="s" x="883" y="863" textLength="16.4" lengthAdjust="spacingAndGlyphs">02s</text>
<text class="s" x="1001" y="863" textLength="16" lengthAdjust="spacingAndGlyphs">03s</text>
<text class="s" x="1119" y="863" textLength="16" lengthAdjust="spacingAndGlyphs">04s</text>
<text class="s" x="1238" y="863" textLength="16" lengthAdjust="spacingAndGlyphs">05s</text>
<text class="s" x="1356" y="863" textLength="16" lengthAdjust="spacingAndGlyphs">06s</text>
<text class="s" x="1474" y="863" textLength="16.5" lengthAdjust="spacingAndGlyphs">07s</text>
<text class="s" x="1593" y="863" textLength="17" lengthAdjust="spacingAndGlyphs">08s</text>
<text class="s" x="1711.7" y="863" textLength="16" lengthAdjust="spacingAndGlyphs">09s</text>
<text class="s" x="1830" y="863" textLength="15" lengthAdjust="spacingAndGlyphs">10s</text>
<g fill="#8a8a8a"><rect x="655" y="866" width="1" height="5"/><rect x="773" y="866" width="1" height="5"/><rect x="892" y="866" width="1" height="5"/><rect x="1010" y="866" width="1" height="5"/><rect x="1128" y="866" width="1" height="5"/><rect x="1247" y="866" width="1" height="5"/><rect x="1365" y="866" width="1" height="5"/><rect x="1483" y="866" width="1" height="5"/><rect x="1602" y="866" width="1" height="5"/><rect x="1720" y="866" width="1" height="5"/><rect x="1838" y="866" width="1" height="5"/></g>
<rect x="648" y="871" width="1197" height="1" fill="#0c0c0c"/>
<rect x="648.7" y="872" width="1189.3" height="15" fill="#5f5f5f"/>
<rect x="648" y="887" width="1197" height="1" fill="#0c0c0c"/>
<path d="M654 872.5H651.5A2.5 2.5 0 0 0 649 875V884A2.5 2.5 0 0 0 651.5 886.5H654Z" fill="#2d8ceb"/>
<path d="M1839 872.5H1842.5A2 2 0 0 1 1844.5 875V884A2 2 0 0 1 1842.5 886.5H1839Z" fill="#2d8ceb"/>
<rect x="1067.5" y="887.5" width="770.5" height="3.5" fill="#11b31f"/>
<rect x="648" y="891.5" width="1197" height="106.5" fill="#343434"/>
<rect x="648" y="891.5" width="7" height="106.5" fill="#2b2b2b"/>
<rect x="1838" y="891.5" width="7" height="106.5" fill="#2b2b2b"/>
<g fill="#212121"><rect x="648" y="908" width="1197" height="1"/><rect x="648" y="925" width="1197" height="1"/><rect x="648" y="942" width="1197" height="1"/><rect x="648" y="959" width="1197" height="1"/><rect x="648" y="976" width="1197" height="1"/><rect x="648" y="993" width="1197" height="1"/></g>
<rect x="1067" y="870" width="1" height="128" fill="#2d8ceb"/>
<path d="M1062 856.5H1073V866L1067.5 871L1062 866Z" fill="#2d8ceb"/><path d="M1065.5 863.5H1069.5M1067.5 863.5V867" stroke="#1a1a1a" stroke-width="1"/>
<use href="#ibm" x="1067.5" y="900.7"/><use href="#ibm" x="1067.5" y="917.5"/><use href="#ibm" x="1067.5" y="934.5"/><use href="#ibm" x="1067.5" y="951.5"/><use href="#ibm" x="1067.5" y="968.5"/><use href="#ibm" x="1067.5" y="985.5"/>
<rect x="1064" y="997" width="7" height="1" fill="#b8b8b8"/>
<path d="M653 1008H663L660 1005H656Z" fill="#b4b4b4"/>
<rect x="682" y="1007.3" width="40" height="1.6" fill="#3d3d3d"/>
<circle cx="678.7" cy="1008" r="3.6" fill="#232323" stroke="#9a9a9a" stroke-width="1.8"/>
<path d="M734 1008L737 1004L738.5 1006L742 1002L750 1008Z" fill="#c4c4c4"/>
<!-- right column of timeline -->
<rect x="1845" y="811" width="17" height="204" fill="#1f1f1f"/>
<rect x="1845" y="811" width="17" height="60" fill="#232323"/>
<rect x="1845" y="872" width="17" height="18" fill="#222"/>
<path d="M1849 874H1860V884L1854.5 888L1849 884Z" fill="#bababa"/>
<path d="M1847.5 905L1852 898H1856V902.5H1860V898.5H1856" fill="#b4b4b4" stroke="#b4b4b4"/><circle cx="1851.5" cy="904" r="2.8" fill="#222" stroke="#c4c4c4"/>
<rect x="1846.5" y="940" width="15" height="25" rx="7" fill="#303030"/>
<!-- edges -->
<rect x="0" y="1016" width="780" height="2" fill="#3a1518"/><rect x="780" y="1016" width="1085" height="2" fill="#4a4a4a"/>
</svg>
</body></html>
